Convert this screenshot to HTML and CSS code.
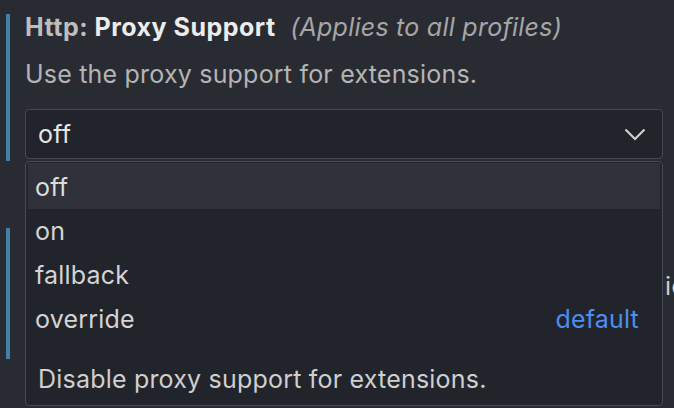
FILE: index.html
```html
<!DOCTYPE html>
<html lang="en">
<head>
<meta charset="utf-8">
<title>Http: Proxy Support</title>
<link rel="stylesheet" href="styles.css">
</head>
<body>
<div class="page">
  <section class="setting">
    <h2 class="title"><span class="cat">Http: </span><span class="name">Proxy Support</span> <em class="scope">(Applies to all profiles)</em></h2>
    <p class="desc">Use the proxy support for extensions.</p>
    <div class="select">
      <span class="value">off</span>
      <svg class="chev" width="22" height="13" viewBox="0 0 22 13"><polyline points="1.5,1.5 11,11 20.5,1.5" fill="none" stroke="#cfcfcf" stroke-width="2.2"/></svg>
    </div>
  </section>
  <section class="setting second">
    <p class="peek">ic</p>
  </section>
  <div class="dropdown">
    <ul class="options">
      <li class="opt active">off</li>
      <li class="opt">on</li>
      <li class="opt">fallback</li>
      <li class="opt"><span>override</span><span class="def">default</span></li>
    </ul>
    <p class="opt-desc">Disable proxy support for extensions.</p>
  </div>
</div>
</body>
</html>
```

FILE: styles.css
```css
html, body {
  margin: 0;
  padding: 0;
  width: 674px;
  height: 408px;
  overflow: hidden;
  background: #292b33;
}
.page {
  position: relative;
  width: 674px;
  height: 408px;
  font-family: Inter, "Noto Sans", sans-serif;
  font-size: 25px;
  letter-spacing: 0.2px;
  color: #cccccc;
  padding-top: 14px;
  box-sizing: border-box;
}
.setting {
  margin-left: 6px;
  border-left: 4px solid #437fa6;
  padding-left: 15px;
  padding-bottom: 2px;
}
.title {
  margin: 0;
  font-size: 25px;
  line-height: 26px;
  font-weight: 700;
  white-space: nowrap;
  letter-spacing: 0.5px;
}
.cat { color: #bdbdbd; }
.name { color: #ececec; }
.scope {
  font-weight: 400;
  font-style: italic;
  color: #a6a6a6;
  margin-left: 8px;
  letter-spacing: 0.25px;
}
.desc {
  margin: 19px 0 0;
  line-height: 30px;
  color: #b4b4b4;
}
.select {
  margin-top: 20px;
  margin-right: 11px;
  height: 50px;
  box-sizing: border-box;
  border: 1px solid #464851;
  border-radius: 4px;
  background: #22242b;
  display: flex;
  align-items: center;
  justify-content: space-between;
  padding: 0 16px 0 12px;
  line-height: 48px;
  color: #e6e6e6;
}
.chev { display: block; margin-top: 1px; }
.second {
  margin-top: 67px;
  height: 131px;
  padding-top: 43px;
  padding-bottom: 0;
  box-sizing: border-box;
}
.peek {
  margin: 0 0 0 640px;
  line-height: 30px;
  color: #cccccc;
  white-space: nowrap;
}
.dropdown {
  position: absolute;
  left: 25px;
  top: 161px;
  width: 638px;
  height: 245px;
  box-sizing: border-box;
  border: 1px solid #474a53;
  border-radius: 4px;
  background: #22242b;
  padding: 1px 2px 0;
}
.options {
  list-style: none;
  margin: 0;
  padding: 0;
}
.opt {
  height: 44px;
  line-height: 44px;
  padding: 0 21px 0 7px;
  display: flex;
  justify-content: space-between;
  color: #d4d4d4;
}
.opt.active {
  height: 46px;
  padding-top: 2px;
  box-sizing: border-box;
  background: #2f323b;
  color: #dddddd;
}
.def { color: #4d8ef0; }
.opt-desc {
  margin: 23px 0 0;
  padding-left: 10px;
  line-height: 30px;
  color: #cfcfcf;
}
```
